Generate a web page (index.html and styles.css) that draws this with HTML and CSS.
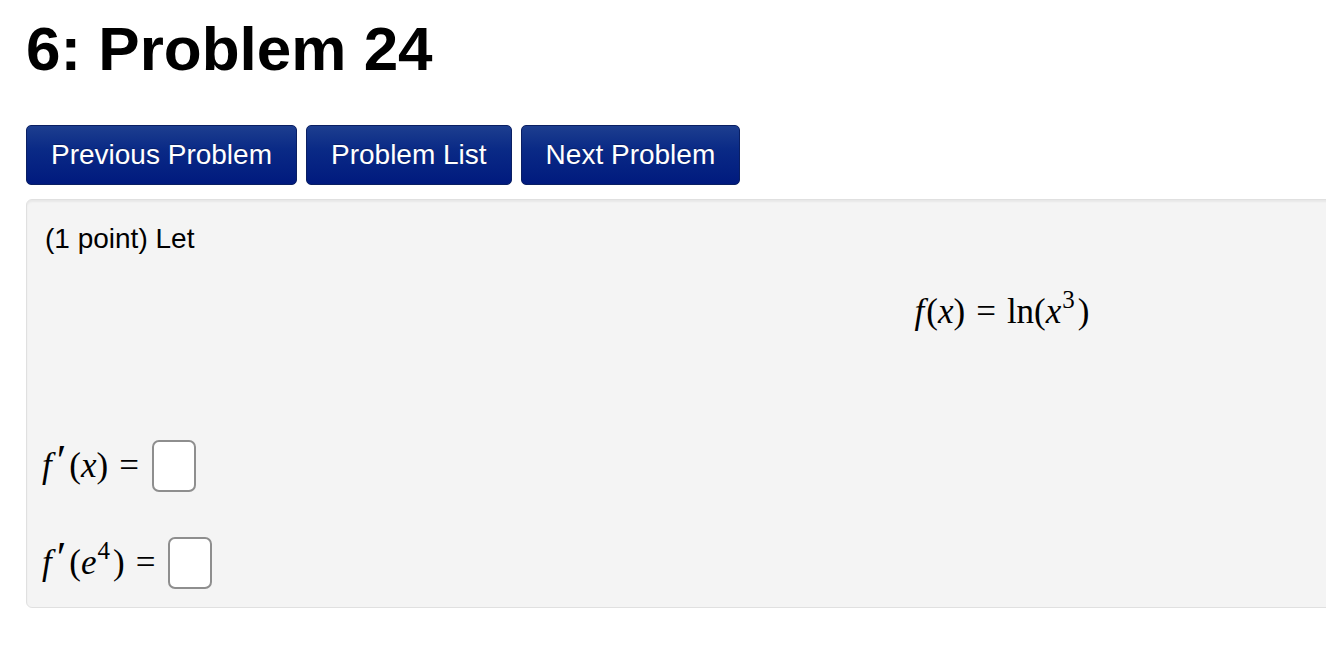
FILE: index.html
```html
<!DOCTYPE html>
<html lang="en">
<head>
<meta charset="utf-8">
<title>6: Problem 24</title>
<link rel="stylesheet" href="styles.css">
</head>
<body>
<div class="page">
  <h1 class="title">6: Problem 24</h1>
  <div class="nav">
    <a class="btn" href="#">Previous Problem</a>
    <a class="btn" href="#">Problem List</a>
    <a class="btn" href="#">Next Problem</a>
  </div>
  <div class="well">
    <p class="intro">(1 point) Let</p>
    <div class="display math">
      <i class="fn">f</i>(<i>x</i>)<span class="rel">=</span>ln(<i>x</i><sup class="sup">3</sup>)
    </div>
    <div class="row row-first">
      <span class="math"><i class="fn">f</i><span class="prime">′</span>(<i>x</i>)<span class="rel">=</span></span>
      <input class="ans" type="text" aria-label="answer 1">
    </div>
    <div class="row row-second">
      <span class="math"><i class="fn">f</i><span class="prime">′</span>(<i>e</i><sup class="sup">4</sup>)<span class="rel">=</span></span>
      <input class="ans" type="text" aria-label="answer 2">
    </div>
  </div>
</div>
</body>
</html>
```
FILE: styles.css
```css
html, body {
  margin: 0;
  padding: 0;
  overflow: hidden;
  background: #ffffff;
}
body {
  font-family: "Liberation Sans", Arial, Helvetica, sans-serif;
  color: #000;
}
.page {
  padding-left: 26px;
}
.title {
  margin: 15px 0 0 0;
  font-size: 62px;
  line-height: 68px;
  font-weight: bold;
}
.nav {
  display: flex;
  gap: 9px;
  margin-top: 42px;
}
.btn {
  display: flex;
  align-items: center;
  height: 60px;
  box-sizing: border-box;
  padding: 0 24px;
  font-size: 28px;
  color: #fff;
  text-decoration: none;
  border: 1px solid #0a1f63;
  border-radius: 5px;
  background: linear-gradient(to bottom, #1d3e8f 0%, #0a2a86 40%, #001a7e 100%);
  text-shadow: 0 -1px 0 rgba(0, 0, 0, 0.25);
}
.well {
  margin-top: 14px;
  width: 1952px;
  box-sizing: border-box;
  padding: 18px;
  background: #f4f4f4;
  border: 1px solid #e0e0e0;
  border-radius: 6px;
  box-shadow: inset 0 2px 2px rgba(0, 0, 0, 0.05);
}
.intro {
  margin: 0;
  font-size: 28px;
  line-height: 42px;
}
.math {
  font-family: "Liberation Serif", "Times New Roman", serif;
  font-size: 35px;
  line-height: 44px;
  white-space: nowrap;
}
.math i {
  font-style: italic;
}
.fn {
  margin-right: 2px;
}
.rel {
  margin: 0 11px;
}
.sup {
  font-size: 25px;
  line-height: 0;
  vertical-align: 0;
  position: relative;
  top: -15px;
  margin-left: 1px;
  margin-right: 3px;
}
.prime {
  display: inline-block;
  font-size: 44px;
  line-height: 0;
  transform: translateY(-2px);
  margin: 0 3px 0 3px;
}
.display {
  margin-top: 30px;
  text-align: center;
}
.row {
  display: flex;
  align-items: center;
}
.row .math {
  line-height: 40px;
  margin-left: -3px;
}
.row .rel {
  margin-right: 13px;
}
.row-first {
  margin-top: 106px;
}
.row-second {
  margin-top: 45px;
}
.ans {
  width: 44px;
  height: 52px;
  box-sizing: border-box;
  margin: 0;
  padding: 0;
  background: #fff;
  border: 2px solid #8e8e8e;
  border-radius: 7px;
}
```
